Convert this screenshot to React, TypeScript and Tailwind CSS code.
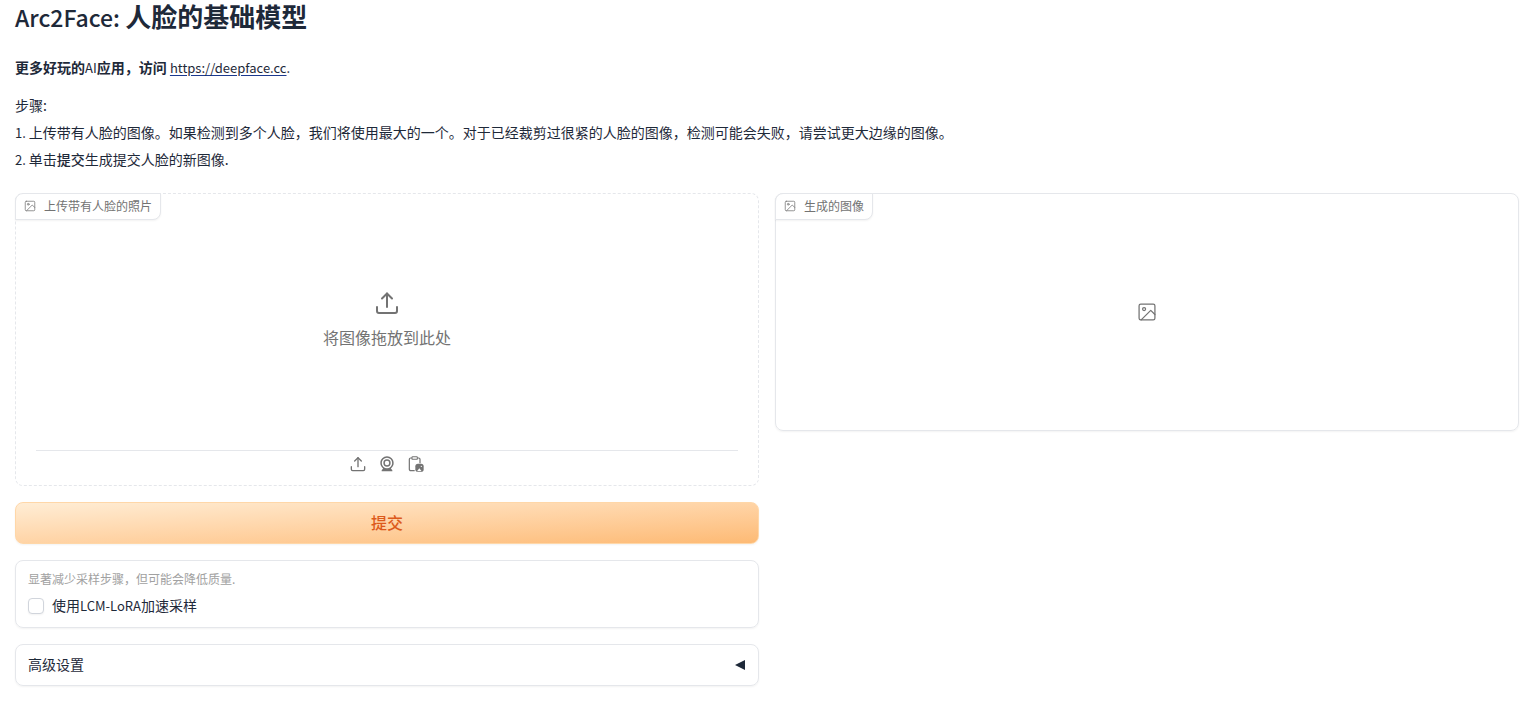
import { useState } from "react";
import type { ReactNode } from "react";

const ImageIcon = ({ className }: { className: string }) => (
  <svg
    className={className}
    viewBox="0 0 24 24"
    fill="none"
    stroke="currentColor"
    strokeWidth="1.5"
    strokeLinecap="round"
    strokeLinejoin="round"
    aria-hidden="true"
  >
    <rect x="2.5" y="2.5" width="19" height="19" rx="2" ry="2" />
    <circle cx="8.500" cy="8.5" r="1.8" />
    <polyline points="21.500 15 16.500 10 5 21.500" />
  </svg>
);

const UploadIcon = ({ className }: { className: string }) => (
  <svg
    className={className}
    viewBox="0 0 24 24"
    fill="none"
    stroke="currentColor"
    strokeWidth="2"
    strokeLinecap="round"
    strokeLinejoin="round"
    aria-hidden="true"
  >
    <path d="M22 16v4a2 2 0 0 1-2 2H4a2 2 0 0 1-2-2v-4" />
    <polyline points="17 7.500 12 2.500 7 7.500" />
    <line x1="12" y1="2.5" x2="12" y2="16" />
  </svg>
);

const WebcamIcon = ({ className }: { className: string }) => (
  <svg className={className} viewBox="0 0 24 24" fill="currentColor" aria-hidden="true">
    <path d="M12 0.500c5.500 0 10 4.500 10 10 0 3.400-1.700 6.300-4.200 8.100L20 21.500V23H4v-1.500l2.200-2.900C3.700 16.800 2 13.900 2 10.500c0-5.500 4.500-10 10-10m0 2.200a7.800 7.800 0 1 0 0 15.600 7.800 7.800 0 0 0 0-15.600m0 2.300a5.500 5.500 0 1 1 0 11 5.500 5.500 0 0 1 0-11m0 2.200a3.300 3.300 0 1 0 0 6.600 3.300 3.300 0 0 0 0-6.600" />
  </svg>
);

const PasteIcon = ({ className }: { className: string }) => (
  <svg className={className} viewBox="0 0 24 24" fill="none" aria-hidden="true">
    <path
      d="M10 22H4a2 2 0 0 1-2-2V5a2 2 0 0 1 2-2h2M14 3h2a2 2 0 0 1 2 2v6"
      stroke="currentColor"
      strokeWidth="1.800"
    />
    <rect x="6" y="1" width="8" height="4" rx="1" stroke="currentColor" strokeWidth="1.600" />
    <rect x="11" y="11.500" width="12.500" height="12.500" rx="4" fill="currentColor" />
    <circle cx="20" cy="15.500" r="1" fill="white" />
    <path d="M13.500 23l3.500-4.500 3.500 4.500z" fill="white" />
  </svg>
);

const BlockLabel = ({ children }: { children: ReactNode }) => (
  <div className="absolute -left-px -top-px flex h-[27px] items-center rounded-tl-lg rounded-br-lg border border-gray-200 bg-white px-2 pb-0.5 text-xs text-neutral-500 shadow-xs">
    <ImageIcon className="mr-2 h-3 w-3" />
    {children}
  </div>
);

export default function App() {
  const [useLcm, setUseLcm] = useState(false);
  const [advancedOpen, setAdvancedOpen] = useState(false);

  return (
    <main className="pl-[15px] pr-[13px] pb-4 font-['Noto_Sans_CJK_SC',sans-serif] text-sm text-gray-800">
      <h1 className="text-[26px] font-bold leading-8">
        <span className="text-[23px] font-medium">Arc2Face: </span>
        人脸的基础模型
      </h1>

      <p className="mt-[21px] leading-[26px]">
        <b>
          更多好玩的<span className="text-[13px] font-normal">AI</span>应用，访问{" "}
        </b>
        <span className="text-[13px]">
          <a
            href="https://deepface.cc"
            className="underline decoration-blue-900 underline-offset-2"
          >
            https://deepface.cc
          </a>
          .
        </span>
      </p>

      <div className="mt-[11px] leading-[27px]">
        <p>步骤:</p>
        <p>
          <span className="text-[13px]">1. </span>
          上传带有人脸的图像。如果检测到多个人脸，我们将使用最大的一个。对于已经裁剪过很紧的人脸的图像，检测可能会失败，请尝试更大边缘的图像。
        </p>
        <p>
          <span className="text-[13px]">2. </span>
          单击<b className="font-medium">提交</b>生成提交人脸的新图像.
        </p>
      </div>

      <div className="mt-5 grid grid-cols-2 items-start gap-4">
        <div className="flex flex-col gap-4">
          <section className="relative flex h-[293px] flex-col rounded-lg border border-dashed border-gray-200 text-neutral-500">
            <BlockLabel>上传带有人脸的照片</BlockLabel>
            <button
              type="button"
              className="flex flex-1 flex-col items-center justify-center pb-1 text-base leading-6"
            >
              <UploadIcon className="mb-2.5 h-6 w-6" />
              将图像拖放到此处
            </button>
            <div className="mx-5 flex h-[35px] items-start justify-center gap-[13px] border-t border-gray-200 pt-1">
              <button type="button" aria-label="上传" className="py-px">
                <UploadIcon className="h-4 w-4" />
              </button>
              <button type="button" aria-label="摄像头" className="py-px">
                <WebcamIcon className="h-4 w-4" />
              </button>
              <button type="button" aria-label="粘贴" className="py-px">
                <PasteIcon className="h-4 w-4" />
              </button>
            </div>
          </section>

          <button
            type="button"
            className="h-[42px] rounded-lg border border-orange-200 bg-linear-to-br from-[#ffedd5] to-[#fdba74] pb-0.5 text-base font-medium text-[#dc5a1c] shadow-xs"
          >
            提交
          </button>

          <section className="h-[68px] rounded-lg border border-gray-200 px-3 pt-2 shadow-xs">
            <p id="lcm-info" className="text-xs leading-5 text-neutral-400">
              显著减少采样步骤，但可能会降低质量.
            </p>
            <label className="mt-1.5 flex items-center gap-2 leading-5">
              <input
                type="checkbox"
                aria-describedby="lcm-info"
                checked={useLcm}
                onChange={(e) => setUseLcm(e.target.checked)}
                className="h-4 w-4 appearance-none rounded border border-gray-300 bg-white shadow-xs checked:bg-orange-500"
              />
              <span>
                使用<span className="text-[13px]">LCM-LoRA</span>加速采样
              </span>
            </label>
          </section>

          <button
            type="button"
            aria-expanded={advancedOpen}
            onClick={() => setAdvancedOpen((v) => !v)}
            className="flex h-[42px] items-center justify-between rounded-lg border border-gray-200 px-3 pb-0.5 shadow-xs"
          >
            高级设置
            <svg
              className={advancedOpen ? "h-3 w-3 -rotate-90" : "h-3 w-3"}
              viewBox="0 0 12 12"
              fill="currentColor"
              aria-hidden="true"
            >
              <path d="M1 7 11 2v10z" />
            </svg>
          </button>
        </div>

        <section className="relative flex h-[238px] items-center justify-center rounded-lg border border-gray-200 text-neutral-500 shadow-xs">
          <BlockLabel>生成的图像</BlockLabel>
          <ImageIcon className="h-5 w-5" />
        </section>
      </div>
    </main>
  );
}
